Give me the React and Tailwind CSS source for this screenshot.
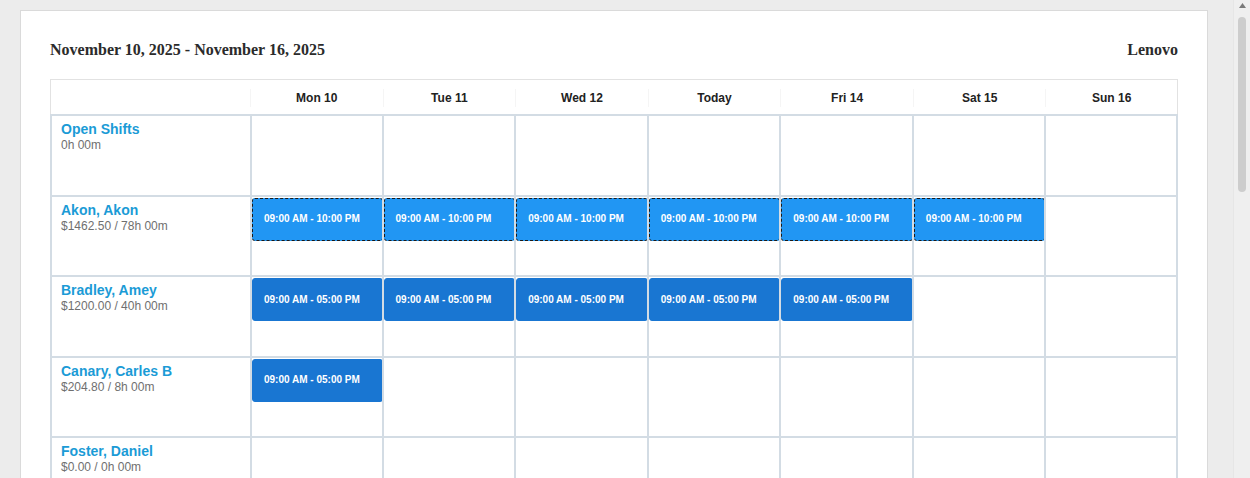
import React from 'react';

const days = ['Mon 10', 'Tue 11', 'Wed 12', 'Today', 'Fri 14', 'Sat 15', 'Sun 16'];

// shift kind per day: 'open' = dashed light blue, 'set' = solid dark blue
const rows = [
  { name: 'Open Shifts', sub: '0h 00m', shifts: [] },
  {
    name: 'Akon, Akon',
    sub: '$1462.50 / 78h 00m',
    shifts: [0, 1, 2, 3, 4, 5].map((d) => ({ day: d, label: '09:00 AM - 10:00 PM', kind: 'open' })),
  },
  {
    name: 'Bradley, Amey',
    sub: '$1200.00 / 40h 00m',
    shifts: [0, 1, 2, 3, 4].map((d) => ({ day: d, label: '09:00 AM - 05:00 PM', kind: 'set' })),
  },
  {
    name: 'Canary, Carles B',
    sub: '$204.80 / 8h 00m',
    shifts: [{ day: 0, label: '09:00 AM - 05:00 PM', kind: 'set' }],
  },
  { name: 'Foster, Daniel', sub: '$0.00 / 0h 00m', shifts: [] },
];

function Shift({ label, kind }) {
  return (
    <div
      className={`h-[43px] flex items-center pl-[11px] rounded-[3px] text-white text-[10px] font-bold leading-none ${
        kind === 'open'
          ? 'bg-[#2196f3] border border-dashed border-[#1a1a1a]'
          : 'bg-[#1976d2] border border-[#1976d2]'
      }`}
    >
      {label}
    </div>
  );
}

export default function App() {
  return (
    <div
      className="h-[478px] overflow-hidden flex bg-[#ececec]"
      style={{ fontFamily: '"Liberation Sans", Arial, sans-serif' }}
    >
      <main className="flex-1 pl-[20px] pr-[25px] pt-[10px]">
        <div className="bg-white border border-[#dadada] px-[29px] pt-[29px]">
          {/* Week title */}
          <div
            className="flex items-center justify-between h-[19px] text-[16px] font-bold text-[#2b2b2b] leading-none"
            style={{ fontFamily: '"Liberation Serif", "Times New Roman", serif' }}
          >
            <span>November 10, 2025 - November 16, 2025</span>
            <span>Lenovo</span>
          </div>

          {/* Schedule grid */}
          <div className="mt-[20px] grid grid-cols-[200px_repeat(7,1fr)]">
            <div className="h-[35px] border-t border-l border-[#e2e2e2]" />
            {days.map((d, i) => (
              <div
                key={d}
                className={`h-[35px] flex items-center justify-center pt-[2px] border-t border-[#e2e2e2] text-[12px] font-bold text-[#222] ${
                  i === days.length - 1 ? 'border-r' : ''
                }`}
              >
                <span className="border-l border-[#f5f5f5] w-full text-center">{d}</span>
              </div>
            ))}

            {rows.map((row) => (
              <React.Fragment key={row.name}>
                <div className="h-[80.5px] border-t-2 border-l-2 border-[#d3dce4] pl-[9px] pt-[5px]">
                  <div className="text-[14px] font-bold leading-[16px] text-[#1b9bd6]">{row.name}</div>
                  <div className="text-[12px] leading-[16px] text-[#6f6f6f]">{row.sub}</div>
                </div>
                {days.map((d, i) => {
                  const shift = row.shifts.find((s) => s.day === i);
                  return (
                    <div
                      key={d}
                      className={`h-[80.5px] border-t-2 border-l-2 border-[#d3dce4] pt-[1px] ${
                        i > 0 ? '-ml-px' : ''
                      } ${i === days.length - 1 ? 'border-r-2' : ''}`}
                    >
                      {shift && <Shift label={shift.label} kind={shift.kind} />}
                    </div>
                  );
                })}
              </React.Fragment>
            ))}
          </div>
        </div>
      </main>

      {/* Fake vertical scrollbar */}
      <div className="w-[17px] bg-[#efefef] border-l border-[#e6e6e6] flex flex-col items-center">
        <svg width="7" height="5" viewBox="0 0 7 5" className="mt-[3px]">
          <path d="M3.5 0 L7 5 L0 5 Z" fill="#7a7a7a" />
        </svg>
        <div className="mt-[9px] w-[8px] h-[175px] rounded-full bg-[#cdcdcd]" />
      </div>
    </div>
  );
}
